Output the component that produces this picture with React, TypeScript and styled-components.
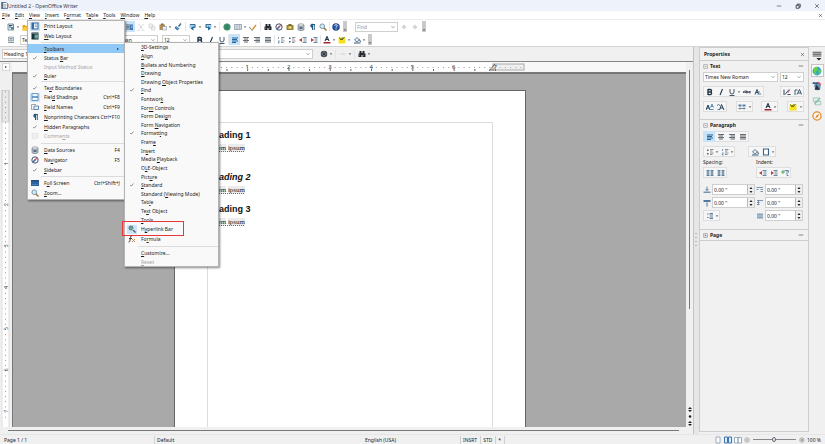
import React from "react";
import styled, { createGlobalStyle, css } from "styled-components";

const Global = createGlobalStyle`
  * { box-sizing: border-box; }
  html, body { margin: 0; background: #f0f0f0; }
  body { font: 5px/8px "Noto Sans", "Open Sans", sans-serif; color: #1c1c1c; }
  button, input, select { font: inherit; color: inherit; margin: 0; padding: 0; border: 0; background: none; }
  svg { display: block; flex: none; }
`;

/* ---------- icons, all on a 16 unit grid ---------- */

const align = (rows: number[][]) => (
  <path d={rows.map(([x, w], i) => `M${x} ${3 + i * 3}h${w}`).join("")} stroke="#555b63" strokeWidth="1.8" />
);

const glyphs: Record<string, React.ReactNode> = {
  writer: <><path d="M1 1h11l3 3v11H1z" fill="#fff" stroke="#33475b" strokeWidth="1.6" /><path d="M4 1v14" stroke="#33475b" strokeWidth="2.4" /><path d="M7 6h5M7 9h5M7 12h5" stroke="#51789c" strokeWidth="1.4" /></>,
  newdoc: <><path d="M2 2h11v12H2z" fill="#e7eff5" stroke="#4f7187" strokeWidth="1.5" /><path d="M4 5h7M4 8h4" stroke="#33566f" strokeWidth="2" /><path d="M8 8h6v5H8z" fill="#3f8a9c" /></>,
  open: <><path d="M1 4h5l2 2h7v9H1z" fill="#e5a91c" /><path d="M1 15l3-7h12l-2 7z" fill="#ffcb45" /></>,
  save: <><path d="M2 2h12v12H2z" fill="#4473a5" /><path d="M5 2h6v5H5z" fill="#fff" /></>,
  mail: <path d="M1 4h14v9H1zl7 5 7-5" fill="#fff" stroke="#557" />,
  edit: <path d="M2 14l2-5 8-8 3 3-8 8z" fill="#f0b63a" stroke="#765" />,
  pdf: <path d="M3 1h10v14H3z" fill="#c54b3d" />,
  printer: <><path d="M2 6h12v6H2z" fill="#68727b" /><path d="M4 2h8v4H4zM4 10h8v5H4z" fill="#fff" stroke="#555" /></>,
  preview: <><path d="M2 1h9v13H2z" fill="#fff" stroke="#567" /><circle cx="10" cy="9" r="4" fill="#bfe0f2" stroke="#345" /></>,
  spell: <><path d="M2 2v12M6 2v12M2 8h4" stroke="#53657b" strokeWidth="2" /><path d="M8 3h6v11H8z" fill="#4377b0" /><path d="M10 6h3M10 9h3" stroke="#fff" /></>,
  cut: <path d="M3 2l8 10M13 2L5 12M3 14a2 2 0 1 0 .1 0M12 14a2 2 0 1 0 .1 0" fill="none" stroke="#cfcfcf" strokeWidth="1.6" />,
  copy: <path d="M2 2h7v8H2zM7 6h7v8H7z" fill="#f3f3f3" stroke="#d0d0d0" strokeWidth="1.4" />,
  paste: <><path d="M1 3h11v11H1z" fill="#b78c45" /><path d="M4 1h5v3H4z" fill="#6c6d70" /><path d="M7 7h8v7H7z" fill="#edf3f8" stroke="#697c8b" /></>,
  brush: <><path d="M14 1L9 7" stroke="#4c6d8a" strokeWidth="3" /><path d="M4 6l7 5-4 4-6-5z" fill="#3a7bb4" /><path d="M4 8l5 4" stroke="#a8d1f0" /></>,
  undo: <><path d="M1 2h12v8H1z" fill="#a9cbe0" /><path d="M2 3h10v6H8" stroke="#33709a" strokeWidth="2" fill="none" /><path d="M9 6v9l-6-4z" fill="#1f6ca2" /></>,
  redo: <><path d="M3 2h12v8H3z" fill="#a9cbe0" /><path d="M14 3H4v6h4" stroke="#33709a" strokeWidth="2" fill="none" /><path d="M8 6v9l6-4z" fill="#1f6ca2" /></>,
  globe: <><circle cx="8" cy="8" r="7" fill="#4a9d62" /><path d="M1 8h14M8 1v14M3 4c3 2 7 2 10 0M3 12c3-2 7-2 10 0" stroke="#246c78" fill="none" strokeWidth="1.2" /></>,
  table: <><path d="M1 3h14v10H1z" fill="#eef2f6" stroke="#7b8da0" strokeWidth="1.4" /><path d="M1 6h14M1 10h14M6 3v10M11 3v10" stroke="#8b9aa9" /></>,
  pencil: <><path d="M1 8c3 6 5 7 7 5" fill="none" stroke="#4a4a4a" strokeWidth="1.6" /><path d="M7 13l7-9" stroke="#e2953b" strokeWidth="3" /></>,
  binoc: <><path d="M3 2h4v5H3zM9 2h4v5H9zM1 7h6v7H1zM9 7h6v7H9zM6 6h4v4H6z" fill="#23272e" /><path d="M3 9v3M11 9v3" stroke="#8b95a5" /></>,
  compass: <><circle cx="8" cy="8" r="6.3" fill="#fff" stroke="#3c4e75" strokeWidth="2" /><path d="M13 3L9 10 6 7z" fill="#d0453a" /><path d="M3 13l3-6 3 3z" fill="#345c9b" /></>,
  gallery: <><path d="M1 4h14v10H1z" fill="#9b8430" /><path d="M5 2h6v3H5z" fill="#746322" /><path d="M5 7h6v4H5z" fill="#f4e9a2" /></>,
  db: <><path d="M2 4v9c0 3 12 3 12 0V4" fill="#b7bec9" stroke="#667382" strokeWidth="1.2" /><ellipse cx="8" cy="4" rx="6" ry="2.4" fill="#edf1f6" stroke="#667382" strokeWidth="1.2" /><path d="M5 8h6v4H5z" fill="#5b6e82" /></>,
  pilcrow: <path d="M12.500 2v12M9 2v12M14 3H6M9 2a3.500 3.500 0 0 0 0 7z" fill="#245b83" stroke="#245b83" strokeWidth="2" />,
  zoom: <><path d="M9 9l6 6" stroke="#a17633" strokeWidth="3" /><circle cx="6.500" cy="6.500" r="4.700" fill="#cfe7f6" stroke="#66879f" strokeWidth="1.600" /></>,
  help: <><circle cx="8" cy="8" r="7.500" fill="#234f9e" /><path d="M5.500 6c0-4 6-3 5 0-.4 1.300-2.500 1.500-2.500 3.500M8 11v2" fill="none" stroke="#fff" strokeWidth="1.800" /></>,
  up: <path d="M8 3l5 5-5 5-5-5z" fill="#d4d4d4" />,
  styles: <><path d="M3 2h10v8H3z" fill="#eef2f5" stroke="#7a8791" strokeWidth="1.400" /><path d="M5 5h6M5 8h6M2 13h12" stroke="#5f7584" strokeWidth="1.500" /></>,
  bold: <path d="M4 2v12M4 3h4.500a2.500 2.500 0 0 1 0 5H4h5a2.700 2.700 0 0 1 0 5.300H4" fill="none" stroke="#1e3347" strokeWidth="2.800" />,
  italic: <path d="M11 2L6 14" stroke="#1e3347" strokeWidth="2.200" />,
  underline: <path d="M4 2v6a4 4 0 0 0 8 0V2M3 15h10" fill="none" stroke="#304558" strokeWidth="1.800" />,
  strike: <path d="M1 10V7l2-1 1 1v3M6 4v6h3V7H6M15 7h-3v3h3M0 8h16" fill="none" stroke="#303b47" strokeWidth="1.400" />,
  shadow: <><path d="M2 13L6 3l4 10M4 9h4" fill="none" stroke="#29465e" strokeWidth="2" /><path d="M7 14l3-8 4 8M9 12h4" fill="none" stroke="#6f93b1" strokeWidth="1.400" /></>,
  left: <path d="M2 4h12M2 7h10M2 10h12M2 13h8" stroke="#1f5f91" strokeWidth="1.900" />,
  center: align([[2, 12], [4, 8], [2, 12], [4, 8]]),
  right: align([[2, 12], [5, 9], [2, 12], [5, 9]]),
  justify: align([[2, 12], [2, 12], [2, 12], [2, 12]]),
  numbered: <><path d="M3 2v4M2 10h3l-3 4h3" stroke="#3c6a91" fill="none" strokeWidth="1.300" /><path d="M8 3h7M8 6h5M8 10h7M8 13h5" stroke="#666" strokeWidth="1.400" /></>,
  bullets: <><path d="M2 3h3v3H2zM2 10h3v3H2z" fill="#2c6391" /><path d="M8 3h7M8 6h5M8 10h7M8 13h5" stroke="#666" strokeWidth="1.400" /></>,
  outdent: <><path d="M7 3h8M9 6h6M9 10h6M7 13h8" stroke="#456c8f" strokeWidth="1.600" /><path d="M0 8l6-4v8z" fill="#c43d35" /></>,
  indent: <><path d="M7 3h8M9 6h6M9 10h6M7 13h8" stroke="#456c8f" strokeWidth="1.600" /><path d="M8 8L2 4v8z" fill="#c43d35" /></>,
  hanging: <><path d="M7 3h8v4M12 3v10h3" fill="none" stroke="#557fa1" strokeWidth="1.800" /><path d="M0 6h8M4 2v8" stroke="#58a858" strokeWidth="2" /></>,
  fontcolor: <><path d="M4 10L8 1l4 9M6 7h4" fill="none" stroke="#24384b" strokeWidth="2.200" /><path d="M1 12h14v3H1z" fill="#a6262e" /></>,
  highlight: <><path d="M1 3h14v12H1z" fill="#f7e21f" /><path d="M3 3l3 5 3-5M8 8l5-6" fill="none" stroke="#566025" strokeWidth="2" /></>,
  fill: <><path d="M3 8l5-5 5 5-5 4z" fill="#e7f0f7" stroke="#355b7a" strokeWidth="1.600" /><path d="M2 14h13M13 7l2 5" stroke="#355b7a" strokeWidth="2" /></>,
  gear: <><circle cx="8" cy="8" r="6.500" fill="#414850" /><path d="M3 8h10M8 3v10" stroke="#a4adb6" strokeWidth="1.500" /><circle cx="8" cy="8" r="2" fill="#20252b" /></>,
  faint: <path d="M3 8h10" stroke="#d0d0d0" strokeWidth="2" />,
  print: <><path d="M1 1h14v14H1z" fill="#376aa2" /><path d="M6 3h7v10H6z" fill="#e7f0fa" /><path d="M8 6h4M8 9h4" stroke="#376aa2" /></>,
  web: <><path d="M1 1h14v14H1z" fill="#17323a" /><path d="M7 5h7v8H7z" fill="#69a890" /><path d="M2 3h12" stroke="#a9bdc4" /></>,
  shading: <><path d="M2 1h12v14H2z" fill="#eef6fd" stroke="#5384b7" strokeWidth="1.600" /><path d="M2 8h12" stroke="#326da9" strokeWidth="2.500" /></>,
  names: <><path d="M1 3h9M1 3v10h4" fill="none" stroke="#777" strokeWidth="1.300" /><path d="M6 6h9v7H6z" fill="#e3eef8" stroke="#416f9e" strokeWidth="1.600" /></>,
  comment: <path d="M2 3h12v9H8l-3 3v-3H2z" fill="#f0f0f0" stroke="#d9d9d9" />,
  screen: <><path d="M0 2h16v12H0z" fill="#2f639d" /><path d="M0 2h16v3H0z" fill="#224b7d" /><path d="M2 11h12" stroke="#6b9ac6" /></>,
  link: <><path d="M10 10l5 5" stroke="#4b5a66" strokeWidth="2.500" /><circle cx="6" cy="6" r="4" fill="#70a796" stroke="#3f6670" strokeWidth="1.600" /><path d="M9 9h5" stroke="#ddd" strokeWidth="2" /></>,
  fx: <><path d="M8 2C5 1 5 4 4.500 8S3 15 1 14M2 7h6" fill="none" stroke="#2c2c2c" strokeWidth="1.800" /><path d="M8 8l6 6M14 8l-6 6" stroke="#c3832c" strokeWidth="1.800" /></>,
  check: <path d="M3 8l3 3 6-7" fill="none" stroke="#555" strokeWidth="1.700" />,
  caret: <path d="M3 6h10l-5 5z" fill="#333" />,
  chevron: <path d="M4 6l4 4 4-4" fill="none" stroke="#666" strokeWidth="1.600" />,
  arrow: <path d="M5 3l6 5-6 5z" fill="#222" />,
  minus: <path d="M2 8h12" stroke="#333" strokeWidth="1.500" />,
  restore: <path d="M3 6h8v8H3zM6 6V3h8v8h-3" fill="none" stroke="#222" strokeWidth="2" />,
  close: <path d="M3 3l10 10M13 3L3 13" stroke="#333" strokeWidth="1.600" />,
  grow: <><path d="M0 14L4 4l4 10M2 10h4" fill="none" stroke="#253e54" strokeWidth="2" /><path d="M9 9l3-7 3 7M10 7h4M8 13h7" fill="none" stroke="#4d84b0" strokeWidth="1.800" /></>,
  shrink: <><path d="M5 14l4-11 5 11M7 10h5" fill="none" stroke="#253e54" strokeWidth="2" /><path d="M0 6l3-4 3 4M1 13h4" fill="none" stroke="#4d84b0" strokeWidth="1.800" /></>,
  scriptUp: <><path d="M2 3v11M4 13L12 3M9 13h6" stroke="#314a62" strokeWidth="2" /><path d="M10 10l4-7" stroke="#b84444" strokeWidth="1.500" /></>,
  scriptDown: <path d="M2 14V4M2 4h5M6 13l5-10 4 10M8 10h6" fill="none" stroke="#314a62" strokeWidth="1.800" />,
  spacingChars: <><path d="M1 3h6v4H1zM9 3h6v4H9z" fill="#4f7fa7" /><path d="M2 11h12M4 9l-2 2 2 2M12 9l2 2-2 2" fill="none" stroke="#4f6272" strokeWidth="1.500" /></>,
  frame: <path d="M3 2h10v12H3z" fill="#fff" stroke="#376184" strokeWidth="2.200" />,
  gapMore: <path d="M1 3h6M9 3h6M1 6h6M9 6h6M1 10h6M9 10h6M1 13h6M9 13h6M4 3v10M12 3v10" stroke="#446b8b" strokeWidth="1.600" />,
  above: <><path d="M8 1v8M5 6l3 3 3-3" fill="none" stroke="#4777a0" strokeWidth="1.700" /><path d="M1 11h14v3H1z" fill="#7193b1" /></>,
  below: <><path d="M1 2h14v4H1z" fill="#52799b" /><path d="M8 7v8" stroke="#4777a0" strokeWidth="2" /></>,
  before: <path d="M1 3h13M9 7h5M9 11h5M1 7h4" stroke="#6485a3" strokeWidth="1.700" />,
  after: <path d="M2 3h12M2 7h5M2 11h5M5 3v9" stroke="#6485a3" strokeWidth="1.700" />,
  first: <><path d="M2 2h12v12H2z" fill="#b9c9d7" /><path d="M2 5h12M2 8h12M2 11h12" stroke="#7f98ae" strokeWidth="1.400" /></>,
  lines: <path d="M2 4h3M2 11h3M7 3h7M7 6h7M7 10h7M7 13h7" stroke="#37658b" strokeWidth="1.600" />,
  menu: <><path d="M1 2h14M1 5h14M1 8h14" stroke="#555" strokeWidth="1.800" /><path d="M7 11h8l-4 4z" fill="#222" /></>,
  world: <><circle cx="8" cy="8" r="7" fill="#33a6c9" /><path d="M3 3l5-2 2 5-4 3 2 5-5-3zM11 6l4 1-3 6-2-4z" fill="#6bcf48" /></>,
  cube: <><path d="M8 2l6 5-1 6-5 2-5-7z" fill="#5e8db4" /><path d="M1 3l5 1 4-1" stroke="#35608c" strokeWidth="3" /><path d="M7 6l6 8H4z" fill="#253140" /><path d="M10 2l4 4" stroke="#cd4a5b" strokeWidth="2.500" /></>,
  paint: <><path d="M2 3h9v6H2zM5 8h9v6H5z" fill="#e0f1e8" stroke="#9bbcae" strokeWidth="1.200" /><path d="M4 13l9-10" stroke="#83b9b5" strokeWidth="1.800" /></>,
  orange: <><circle cx="8" cy="8" r="6.500" fill="#fff7eb" stroke="#e08b30" strokeWidth="2" /><path d="M12 4L9 10 5 12l2-5z" fill="#e18b2d" /></>,
  minusBox: <path d="M2 2h12v12H2zM5 8h6" fill="none" stroke="#777" strokeWidth="1.500" />,
  plusBox: <path d="M2 2h12v12H2zM5 8h6M8 5v6" fill="none" stroke="#666" strokeWidth="1.500" />,
  pageOne: <path d="M4 2h8v12H4z" fill="#fff" stroke="#8094a7" strokeWidth="1.500" />,
  pageTwo: <path d="M1 2h6v12H1zM9 2h6v12H9z" fill="#dcecfb" stroke="#3d75ae" strokeWidth="2" />,
  book: <path d="M1 3h7v11H1zM8 3h7v11H8z" fill="#fff" stroke="#7996b2" strokeWidth="1.500" />,
  out: <><circle cx="8" cy="8" r="6" fill="none" stroke="#777" strokeWidth="1.400" /><path d="M5 8h6" stroke="#444" strokeWidth="1.500" /></>,
  in: <><circle cx="8" cy="8" r="6" fill="none" stroke="#777" strokeWidth="1.400" /><path d="M5 8h6M8 5v6" stroke="#444" strokeWidth="1.500" /></>,
};

const Icon = ({ name, size = 8 }: { name: string; size?: number }) => (
  <svg width={size} height={size} viewBox="0 0 16 16" fill="none" aria-hidden="true">{glyphs[name]}</svg>
);

/* ---------- window frame ---------- */

const Shell = styled.div`
  display: flex; flex-direction: column; height: 100vh; min-height: 300px; overflow: hidden; background: #f0f0f0;
`;
const TitleBar = styled.header`
  display: flex; align-items: center; flex: none; height: 11px; padding: 0 5px 0 1px; background: #eef2fa; color: #3c4148;
`;
const WindowButtons = styled.div`display: flex; gap: 13px; margin-left: auto;`;
const PlainButton = styled.button`display: flex; align-items: center; justify-content: center;`;
const MenuBar = styled.nav`
  display: flex; align-items: center; gap: 5px; flex: none; height: 9px; padding: 0 2px; background: #fff;
  border-bottom: 1px solid #ececec;
`;
const MenuAnchor = styled.div`position: relative; display: flex;`;
const MenuButton = styled.button`display: block; line-height: 8px; white-space: nowrap;`;
const Spacer = styled.span`flex: 1;`;

const Mnemonic = ({ text }: { text: string }) => {
  const i = text.indexOf("_");
  if (i < 0) return <>{text}</>;
  return <>{text.slice(0, i)}<u>{text[i + 1]}</u>{text.slice(i + 2)}</>;
};

/* ---------- menus ---------- */

const popup = css`
  position: absolute; z-index: 5; background: #f9f9f9; border: 1px solid #b4b4b4; box-shadow: 1px 1px 2px #0007;
`;
const ViewMenu = styled.div`${popup} top: 9px; left: -2px; width: 98px; padding-bottom: 1px;`;
const SubMenu = styled.div`${popup} top: -2px; left: 96px; width: 95px;`;
const ToolbarList = styled.div`display: grid; grid-auto-rows: minmax(0, 1fr); height: 181px;`;
const MenuRow = styled.div<{ $tall?: boolean; $active?: boolean }>`
  position: relative; display: flex; height: ${p => (p.$tall ? 10 : 9)}px;
  background: ${p => (p.$active ? "#90c8f6" : "transparent")};
`;
const MenuItem = styled.button`
  display: grid; grid-template-columns: 16px 1fr auto; align-items: center; width: 100%; text-align: left;
  white-space: nowrap; line-height: 8px; padding-right: 4px;
  &:disabled { color: #a5a5a5; }
`;
const MenuIcon = styled.span<{ $on?: boolean }>`
  display: flex; align-items: center; justify-content: center; width: 10px; height: ${p => (p.$on ? 9 : 8)}px; margin-left: 2px;
  background: ${p => (p.$on ? "#cce4f7" : "transparent")};
`;
const Divider = styled.hr<{ $wide?: boolean }>`
  height: 1px; margin: ${p => (p.$wide ? "2px 0 1px 13px" : "1px 0 1px 13px")}; border: 0; background: #dcdcdc;
`;
const Marker = styled.span`
  position: absolute; top: -3px; left: -3px; width: 62px; height: 15px; border: 1px solid #e5383b; pointer-events: none;
`;

type Entry = { text: string; icon?: string; keys?: string; on?: boolean; off?: boolean; tall?: boolean };
const Row = ({ e, children, active }: { e: Entry; children?: React.ReactNode; active?: boolean }) => (
  <MenuRow $tall={e.tall} $active={active}>
    <MenuItem disabled={e.off}>
      <MenuIcon $on={e.on}>{e.icon && <Icon name={e.icon} size={e.icon === "check" ? 6 : 8} />}</MenuIcon>
      <span><Mnemonic text={e.text} /></span>
      <span>{active ? <Icon name="arrow" size={4} /> : e.keys}</span>
    </MenuItem>
    {children}
  </MenuRow>
);

const toolbars = ["_3D-Settings", "_Align", "_Bullets and Numbering", "_Drawing", "Drawing _Object Properties", "_Find",
  "Fontwor_k", "For_m Controls", "Form Desi_gn", "Form _Navigation", "Formatt_ing", "Fram_e", "In_sert", "Media _Playback",
  "O_LE-Object", "Pict_ure", "_Standard", "Standard (_Viewing Mode)", "Tab_le", "Te_xt Object", "_Tools"];
const shownToolbars = ["_Find", "Formatt_ing", "_Standard"];

const ViewMenuPanel = () => (
  <ViewMenu>
    <Row e={{ text: "_Print Layout", icon: "print", on: true, tall: true }} />
    <Row e={{ text: "_Web Layout", icon: "web", tall: true }} />
    <Divider />
    <Row active e={{ text: "_Toolbars" }}>
      <SubMenu>
        <ToolbarList>
          {toolbars.map(t => (
            <MenuItem key={t}>
              <MenuIcon>{shownToolbars.includes(t) && <Icon name="check" size={6} />}</MenuIcon>
              <span><Mnemonic text={t} /></span>
            </MenuItem>
          ))}
        </ToolbarList>
        <Row e={{ text: "H_yperlink Bar", icon: "link", on: true, tall: true }}><Marker /></Row>
        <Row e={{ text: "Fo_rmula", icon: "fx", tall: true }} />
        <Divider $wide />
        <Row e={{ text: "_Customize..." }} />
        <Row e={{ text: "_Reset", off: true }} />
      </SubMenu>
    </Row>
    <Row e={{ text: "Status _Bar", icon: "check" }} />
    <Row e={{ text: "Input Method Status", off: true }} />
    <Row e={{ text: "_Ruler", icon: "check" }} />
    <Divider />
    <Row e={{ text: "Te_xt Boundaries", icon: "check" }} />
    <Row e={{ text: "Fiel_d Shadings", icon: "shading", keys: "Ctrl+F8", on: true, tall: true }} />
    <Row e={{ text: "_Field Names", icon: "names", keys: "Ctrl+F9", tall: true }} />
    <Row e={{ text: "_Nonprinting Characters", icon: "pilcrow", keys: "Ctrl+F10", tall: true }} />
    <Row e={{ text: "_Hidden Paragraphs", icon: "check" }} />
    <Row e={{ text: "Comme_nts", icon: "comment", off: true, tall: true }} />
    <Divider $wide />
    <Row e={{ text: "_Data Sources", icon: "db", keys: "F4", tall: true }} />
    <Row e={{ text: "Na_vigator", icon: "compass", keys: "F5", tall: true }} />
    <Row e={{ text: "_Sidebar", icon: "check" }} />
    <Divider $wide />
    <Row e={{ text: "F_ull Screen", icon: "screen", keys: "Ctrl+Shift+J", tall: true }} />
    <Row e={{ text: "_Zoom...", icon: "zoom", tall: true }} />
  </ViewMenu>
);

/* ---------- toolbars ---------- */

const Toolbars = styled.div`flex: none; background: #fff; border-bottom: 1px solid #d4d4d4;`;
const Toolbar = styled.div`display: flex; align-items: center; height: 13px; padding-left: 5px;`;
const Tool = styled.button<{ $on?: boolean }>`
  display: flex; align-items: center; justify-content: center; flex: none; width: 11px; height: 11px;
  background: ${p => (p.$on ? "#c9e3f8" : "transparent")};
`;
const Caret = styled.button`display: flex; align-items: center; justify-content: center; flex: none; width: 4px; height: 11px;`;
const Separator = styled.span<{ $thin?: boolean }>`
  flex: none; width: 1px; height: 9px; margin: 0 ${p => (p.$thin ? 0 : 1)}px 0 ${p => (p.$thin ? 1 : 2)}px; background: #e4e4e4;
`;
const Grip = styled.button`
  display: flex; align-items: flex-end; flex: none; width: 4px; height: 11px; margin: 0 8px 0 2px; background: #c9c9c9;
`;

const Tools = ({ list, on }: { list: string; on?: string }) => (
  <>
    {list.split(" ").map((n, i) => {
      if (n === "|") return <Separator key={i} />;
      if (n === ":") return <Separator key={i} $thin />;
      if (n === "v") return <Caret key={i} aria-label="More"><Icon name="caret" size={4} /></Caret>;
      if (n === "#") return <Grip key={i} aria-label="Toolbar options"><Icon name="caret" size={4} /></Grip>;
      return <Tool key={i} aria-label={n} $on={n === on}><Icon name={n} /></Tool>;
    })}
  </>
);

const ComboBox = styled.span<{ $w?: number }>`
  position: relative; display: flex; flex: ${p => (p.$w ? "none" : "1")}; width: ${p => (p.$w ? `${p.$w}px` : "auto")};
  height: 10px; background: #fff; border: 1px solid #cfcfcf;
`;
const Select = styled.select`appearance: none; width: 100%; padding-left: 1px; line-height: 8px; outline: 0;`;
const ComboArrow = styled.span`position: absolute; right: 1px; top: 1px; pointer-events: none;`;
const Combo = ({ label, value, w }: { label: string; value: string; w?: number }) => (
  <ComboBox $w={w}>
    <Select aria-label={label} defaultValue={value}><option>{value}</option></Select>
    <ComboArrow><Icon name="chevron" size={6} /></ComboArrow>
  </ComboBox>
);
const FindBox = styled(ComboBox)`color: #999;`;
const FormatFields = styled.div`display: flex; gap: 4px; width: 174px; padding-left: 4px; margin-right: 4px; flex: none;`;
const UrlBar = styled.div`
  display: flex; align-items: center; flex: none; height: 15px; padding-left: 2px; border-bottom: 1px solid #858585;
`;
const UrlFields = styled.div`display: flex; gap: 4px; width: 311px; margin-right: 5px;`;

/* ---------- document area ---------- */

const Main = styled.main`display: flex; flex: 1; min-height: 0;`;
const Work = styled.section`display: flex; flex-direction: column; flex: 1; min-width: 0; border-right: 1px solid #c4c4c4;`;
const WorkGrid = styled.div`
  display: grid; flex: 1; min-height: 0; grid-template: 10px minmax(0, 1fr) 7px / 12px minmax(0, 1fr) 7px;
`;
const Corner = styled.div`
  display: flex; align-items: center; justify-content: center; margin: 1px 2px; border: 1px solid #d8d8d8; background: #fff;
`;
const HRulerTrack = styled.div`display: flex; justify-content: center; align-items: center; overflow: hidden; background: #f7f7f7;`;
const VRulerTrack = styled.div`overflow: hidden; padding: 18px 0 0 1px;`;
const Canvas = styled.div`
  display: flex; justify-content: center; overflow: hidden; padding-top: 16px; background: #a9a9a9;
  border: solid #777; border-width: 2px 0 0 1px;
`;
const Paper = styled.article`
  display: flex; width: 352px; height: 100%; flex: none; padding: 31px 32px 0; background: #fff;
  border: solid #666; border-width: 1px 1px 0;
`;
const TextArea = styled.div`flex: 1; border: 1px solid #dcdcdc; border-bottom: 0; padding-top: 6px;`;
const Heading = styled.h2<{ $italic?: boolean; $gap?: number }>`
  margin: ${p => p.$gap ?? 0}px 0 0; font: ${p => (p.$italic ? "italic " : "")}bold 9px/12px "Liberation Sans", Arial, sans-serif;
  color: #111;
`;
const Para = styled.p`margin: 3px 0 0; font: 7px/9px "Liberation Serif", "Times New Roman", serif; color: #222;`;
const Misspelt = styled.span`
  background: #ebebeb; text-decoration: underline dotted #e23b3b 1px; text-underline-offset: 1px; text-decoration-skip-ink: none;
`;
const VScroll = styled.div`display: flex; flex-direction: column; align-items: center; grid-row: 1 / 4; grid-column: 3; padding: 8px 0;`;
const VThumb = styled.span`width: 1px; height: 67%; background: #777;`;
const Nudge = styled.div`display: flex; flex-direction: column; gap: 2px; margin-top: auto;`;
const HScroll = styled.div`grid-column: 1 / 3; align-self: center; height: 1px; margin: 0 7px 0 8px; background: #777;`;

const inch = 41.3;
const HRuler = () => (
  <svg width="352" height="8" viewBox="0 0 352 8" fontSize="6" fill="#333">
    <rect x="0" y="0" width="33" height="8" fill="#e4e4e4" />
    <rect x="33" y="0" width="286" height="8" fill="#fff" />
    <rect x="320" y="1" width="31" height="6" fill="#efefef" stroke="#aaa" />
    {Array.from({ length: 63 }, (_, i) => (
      <path key={i} d={`M${33 + (i * inch) / 8} 4v1`} stroke={i > 55 ? "#aaa" : "#999"} />
    ))}
    {Array.from({ length: 14 }, (_, i) => <path key={i} d={`M${54 + (i * inch) / 2} 6v2`} stroke="#666" />)}
    {[1, 2, 3, 4, 5, 6, 7].map(n => <text key={n} x={33 + n * inch} y="6" textAnchor="middle">{n}</text>)}
    <path d="M316 8l6-7M316 7h5" stroke="#666" />
  </svg>
);
const VRuler = () => (
  <svg width="9" height="360" viewBox="0 0 9 360" fontSize="5" fill="#444">
    <rect x="1" y="0" width="7" height="32" fill="#e9e9e9" stroke="#bbb" />
    <rect x="1" y="32" width="7" height="328" fill="#fff" stroke="#ddd" />
    {Array.from({ length: 64 }, (_, i) => <path key={i} d={`M4 ${2 + (i * inch) / 8}h1`} stroke="#999" />)}
    {[1, 2, 3, 4, 5, 6, 7].map(n => (
      <text key={n} textAnchor="middle" transform={`translate(7 ${32 + n * inch}) rotate(-90)`}>{n}</text>
    ))}
  </svg>
);
const Handle = () => (
  <svg width="5" height="20" viewBox="0 0 5 20"><path d="M2 2v1M2 6v1M2 10v1M2 14v1" stroke="#888" /></svg>
);
const PageJump = ({ dot }: { dot?: boolean }) => (
  <svg width="4" height="5" viewBox="0 0 8 10">
    {dot ? <circle cx="4" cy="5" r="2.500" fill="#222" /> : <path d="M0 4h8L4 0zM0 6h8l-4 4z" fill="#222" />}
  </svg>
);

/* ---------- sidebar ---------- */

const Splitter = styled.div`display: flex; align-items: center; width: 5px; flex: none; background: #e6e6e6;`;
const Panel = styled.aside`width: 110px; flex: none; border: 1px solid #cdcdcd; margin-bottom: 2px; background: #f1f1f1;`;
const PanelTitle = styled.div`
  display: flex; align-items: center; height: 13px; padding: 0 3px 0 4px; font-weight: bold; border-bottom: 1px solid #cdcdcd;
`;
const Section = styled.section<{ $h?: number }>`
  min-height: ${p => p.$h ?? 0}px; padding: 0 4px 0 3px; border-bottom: 1px solid #cdcdcd;
`;
const SectionTitle = styled.h3`
  display: flex; align-items: center; gap: 2px; height: 10px; margin: 0; font-size: 5px; font-weight: bold;
`;
const Line = styled.div<{ $gap?: number }>`
  display: flex; justify-content: space-between; align-items: center; margin-top: ${p => p.$gap ?? 4}px;
`;
const Group = styled.div`display: flex; height: 11px; border: 1px solid #dedede; background: #f6f6f6; align-items: center;`;
const Halves = styled.div<{ $gap?: number; $first?: number }>`
  display: grid; grid-template-columns: ${p => p.$first ?? 53}px 1fr; align-items: center; justify-items: start;
  margin-top: ${p => p.$gap ?? 0}px;
`;
const Field = styled.label`display: grid; grid-template-columns: 9px 1fr; align-items: center; width: 100%; padding-right: 1px;`;
const Spin = styled.span`display: flex; height: 11px; min-width: 0; background: #fff; border: 1px solid #cfcfcf;`;
const SpinInput = styled.input`flex: 1; min-width: 0; padding-left: 1px; outline: 0;`;
const SpinButtons = styled.span`
  display: flex; flex-direction: column; justify-content: center; align-items: center; width: 7px; background: #eee;
  border-left: 1px solid #bbb;
`;
const More = styled(PlainButton)`margin-left: auto;`;

const SpinArrows = () => (
  <svg width="4" height="8" viewBox="0 0 4 8"><path d="M0.500 3h3L2 1zM0.500 5h3L2 7z" fill="#222" /></svg>
);
const Metric = ({ icon, label }: { icon: string; label: string }) => (
  <Field>
    <Icon name={icon} />
    <Spin><SpinInput aria-label={label} defaultValue={'0.00 "'} /><SpinButtons><SpinArrows /></SpinButtons></Spin>
  </Field>
);
const Title = ({ text, closed }: { text: string; closed?: boolean }) => (
  <SectionTitle>
    <Icon name={closed ? "plusBox" : "minusBox"} size={5} />{text}
    <More aria-label="More options"><Icon name="minus" size={6} /></More>
  </SectionTitle>
);
const Deck = styled.nav`display: flex; flex-direction: column; align-items: center; gap: 2px; width: 16px; flex: none; padding-top: 2px;`;
const DeckTab = styled.button<{ $on?: boolean }>`
  display: flex; align-items: center; justify-content: center; width: 13px; height: 13px;
  border: 1px solid ${p => (p.$on ? "#c4c4c4" : "transparent")}; background: ${p => (p.$on ? "#fafafa" : "transparent")};
`;

/* ---------- status bar ---------- */

const StatusBar = styled.footer`
  display: grid; grid-template-columns: 150px 208px 98px minmax(0, 1fr) auto; flex: none; align-items: center;
  height: 10px; padding: 0 4px; border-top: 1px solid #e6e6e6;
`;
const Cell = styled.span`display: flex; white-space: nowrap; line-height: 8px;`;
const Part = styled.span<{ $bar?: boolean }>`
  padding: 0 3px 0 2px; border-left: 1px solid ${p => (p.$bar ? "#cfcfcf" : "transparent")};
`;
const ZoomArea = styled.div`display: flex; align-items: center; gap: 2px; white-space: nowrap;`;
const ZoomSlider = styled.input`
  appearance: none; width: 43px; height: 7px; margin: 0 1px; background: linear-gradient(#888, #888) center / 100% 1px no-repeat;
  &::-webkit-slider-thumb { appearance: none; width: 4px; height: 5px; border: 1px solid #69727e; background: #dce4ee; border-radius: 2px; }
`;

const Sample = () => <Para><Misspelt>Lorem</Misspelt> <Misspelt>ipsum</Misspelt></Para>;

export default function App() {
  return (
    <Shell>
      <Global />
      <TitleBar>
        <Icon name="writer" size={7} />Untitled 2 - OpenOffice Writer
        <WindowButtons>
          {["minus", "restore", "close"].map(n => <PlainButton key={n} aria-label={n}><Icon name={n} size={6} /></PlainButton>)}
        </WindowButtons>
      </TitleBar>
      <MenuBar>
        {["_File", "_Edit", "_View", "_Insert", "F_ormat", "T_able", "_Tools", "_Window", "_Help"].map(t => (
          <MenuAnchor key={t}>
            <MenuButton><Mnemonic text={t} /></MenuButton>
            {t === "_View" && <ViewMenuPanel />}
          </MenuAnchor>
        ))}
        <Spacer />
        <PlainButton aria-label="Close document"><Icon name="close" size={5} /></PlainButton>
      </MenuBar>
      <Toolbars>
        <Toolbar>
          <Tools on="spell" list="newdoc v open save mail | edit | pdf printer preview zoom | | spell cut copy paste v brush | undo v redo v | globe table v pencil | binoc compass gallery db pilcrow zoom : help #" />
          <FindBox $w={43}>
            <Select aria-label="Find" defaultValue="Find"><option>Find</option></Select>
            <ComboArrow><Icon name="chevron" size={6} /></ComboArrow>
          </FindBox>
          <Tools list="up up #" />
        </Toolbar>
        <Toolbar>
          <Tools list="styles" />
          <FormatFields>
            <Combo label="Paragraph style" value="Text body" w={62} />
            <Combo label="Font" value="Times New Roman" />
            <Combo label="Size" value="12" w={28} />
          </FormatFields>
          <Tools on="left" list="bold italic underline : left center right justify : numbered bullets outdent indent : fontcolor v highlight v fill v #" />
        </Toolbar>
      </Toolbars>
      <Main>
        <Work>
          <UrlBar>
            <UrlFields><Combo label="Link name" value="Heading 1" w={100} /><Combo label="Address" value="" /></UrlFields>
            <Tools list="gear v | faint v | binoc v" />
          </UrlBar>
          <WorkGrid>
            <Corner><Icon name="arrow" size={4} /></Corner>
            <HRulerTrack><HRuler /></HRulerTrack>
            <VScroll>
              <VThumb />
              <Nudge>
                <PlainButton aria-label="Previous page"><PageJump /></PlainButton>
                <PlainButton aria-label="Navigation"><PageJump dot /></PlainButton>
                <PlainButton aria-label="Next page"><PageJump /></PlainButton>
              </Nudge>
            </VScroll>
            <VRulerTrack><VRuler /></VRulerTrack>
            <Canvas>
              <Paper>
                <TextArea>
                  <Heading>Heading 1</Heading>
                  <Sample />
                  <Heading $italic $gap={18}>Heading 2</Heading>
                  <Sample />
                  <Heading $gap={8}>Heading 3</Heading>
                  <Sample />
                </TextArea>
              </Paper>
            </Canvas>
            <HScroll />
          </WorkGrid>
        </Work>
        <Splitter><Handle /></Splitter>
        <Panel>
          <PanelTitle>Properties<More aria-label="Close sidebar"><Icon name="close" size={5} /></More></PanelTitle>
          <Section $h={59}>
            <Title text="Text" />
            <Line $gap={1}><Combo label="Font name" value="Times New Roman" w={75} /><Combo label="Font size" value="12" w={24} /></Line>
            <Line>
              <Group><Tools list="bold italic underline v strike shadow" /></Group>
              <Group><Tools list="scriptUp scriptDown" /></Group>
            </Line>
            <Line>
              <Group><Tools list="grow shrink" /></Group>
              <Group><Tools list="spacingChars v" /></Group>
              <Group><Tools list="fontcolor v" /></Group>
              <Group><Tools list="highlight v" /></Group>
            </Line>
          </Section>
          <Section $h={110}>
            <Title text="Paragraph" />
            <Halves $gap={1}><Group><Tools on="left" list="left center right justify" /></Group></Halves>
            <Halves $gap={4} $first={45}>
              <Group><Tools list="bullets v numbered v" /></Group>
              <Group><Tools list="fill frame v" /></Group>
            </Halves>
            <Halves $gap={1}><span>Spacing:</span><span>Indent:</span></Halves>
            <Halves $gap={1}>
              <Group><Tools list="gapMore gapMore" /></Group>
              <Group><Tools list="outdent indent hanging" /></Group>
            </Halves>
            <Halves $gap={6}><Metric icon="above" label="Above spacing" /><Metric icon="before" label="Before indent" /></Halves>
            <Halves $gap={2}><Metric icon="below" label="Below spacing" /><Metric icon="after" label="After indent" /></Halves>
            <Halves $gap={2}><Group><Tools list="lines v" /></Group><Metric icon="first" label="First line indent" /></Halves>
          </Section>
          <Section><Title text="Page" closed /></Section>
        </Panel>
        <Deck>
          {["menu", "world", "cube", "paint", "orange"].map(n => (
            <DeckTab key={n} aria-label={n} $on={n === "world"}><Icon name={n} size={10} /></DeckTab>
          ))}
        </Deck>
      </Main>
      <StatusBar>
        <Cell>Page 1 / 1</Cell>
        <Cell><Part $bar>Default</Part></Cell>
        <Cell><Part>English (USA)</Part></Cell>
        <Cell><Part $bar>INSRT</Part><Part $bar>STD</Part><Part $bar>*</Part><Part $bar /></Cell>
        <ZoomArea>
          <Icon name="pageOne" /><Icon name="pageTwo" /><Icon name="book" />
          <Icon name="out" size={6} /><ZoomSlider type="range" aria-label="Zoom" defaultValue={50} /><Icon name="in" size={6} />100 %
        </ZoomArea>
      </StatusBar>
    </Shell>
  );
}
